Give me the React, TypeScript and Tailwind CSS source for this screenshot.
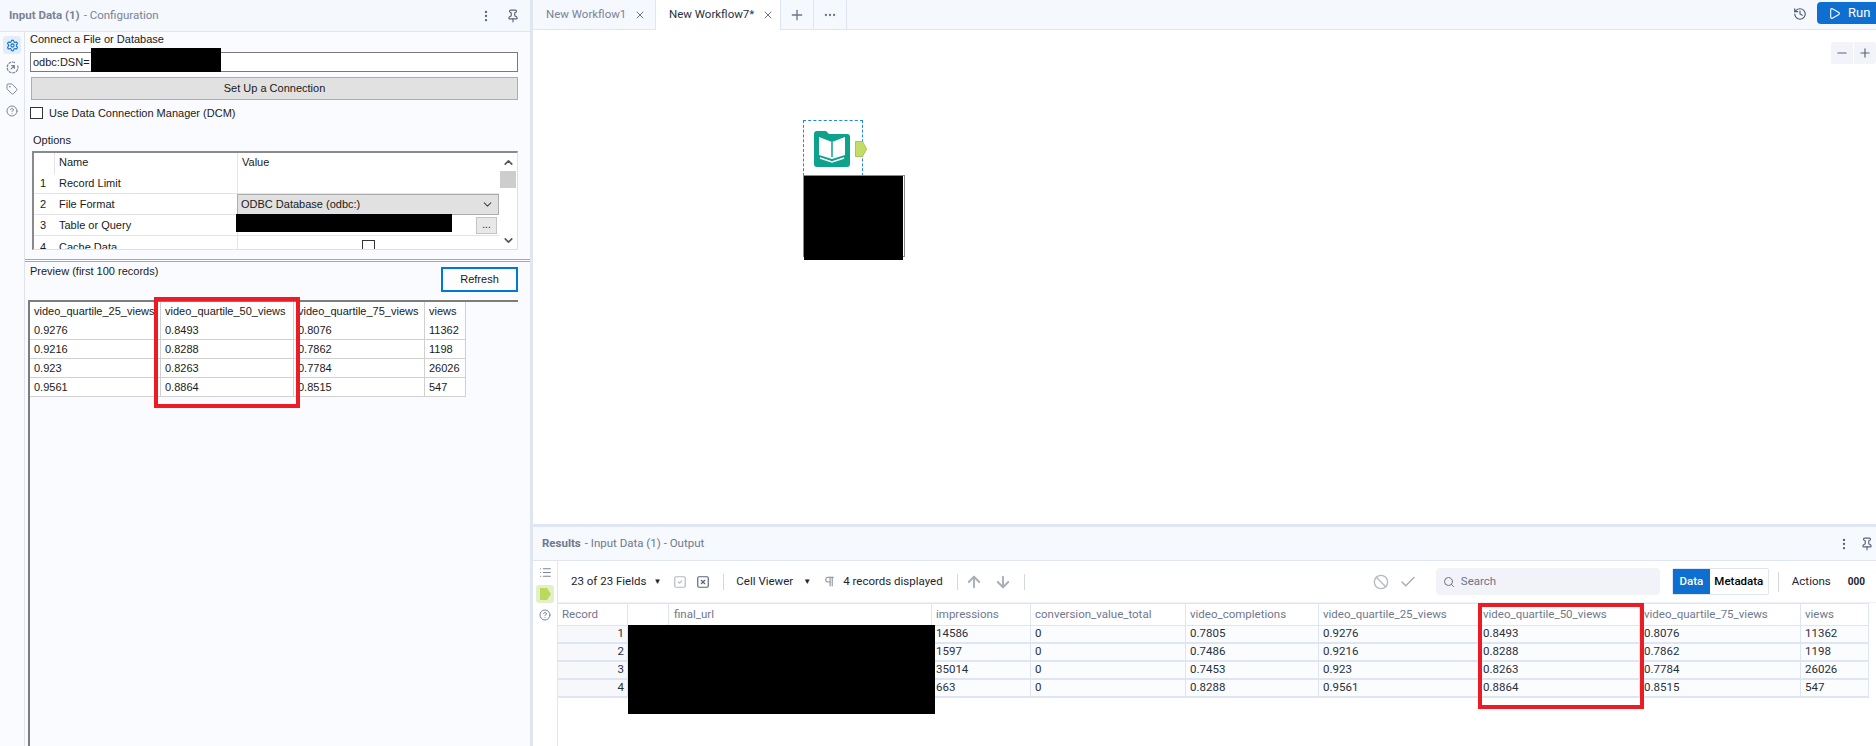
import React from 'react'
import {
  ArrowDown, ArrowUp, Ban, Check, ChevronDown, ChevronUp, CircleHelp, Ellipsis,
  EllipsisVertical, History, List, Minus, Pilcrow, Pin, Play, Plus, Search, Settings, SquareCheck, SquareX, Tag, X,
} from 'lucide-react'

const winFont = "font-['Liberation_Sans',sans-serif] text-[11px]"
const uiFont = "font-['Roboto',sans-serif] text-[11.5px]"

const previewRows = [
  ['0.9276', '0.8493', '0.8076', '11362'],
  ['0.9216', '0.8288', '0.7862', '1198'],
  ['0.923', '0.8263', '0.7784', '26026'],
  ['0.9561', '0.8864', '0.8515', '547'],
]

const resultRows = [
  ['14586', '0', '0.7805', '0.9276', '0.8493', '0.8076', '11362'],
  ['1597', '0', '0.7486', '0.9216', '0.8288', '0.7862', '1198'],
  ['35014', '0', '0.7453', '0.923', '0.8263', '0.7784', '26026'],
  ['663', '0', '0.8288', '0.9561', '0.8864', '0.8515', '547'],
]

const resultHeads = ['impressions', 'conversion_value_total', 'video_completions', 'video_quartile_25_views', 'video_quartile_50_views', 'video_quartile_75_views', 'views']

function OutputIcon() {
  return (
    <svg width="13" height="13" viewBox="0 0 13 13" fill="none" stroke="currentColor" strokeWidth="1.2">
      <path d="M9 1.6a5.4 5.4 0 1 0 2.4 2.4" strokeDasharray="3 0.8" />
      <path d="M4.8 8.2l3.4-3.4M5.2 4.6h3.2v3.2" />
    </svg>
  )
}

function ConfigPanel() {
  return (
    <aside className={`${winFont} w-[530px] shrink-0 flex flex-col bg-[#fafbfe] text-[#1a1a1a]`}>
      {/* header */}
      <div className="h-[32px] shrink-0 flex items-center pl-[9px] pr-[10px] border-b border-[#dfe6f3] bg-[#f5f8fc] text-[#7a8298]">
        <span className="font-['Roboto',sans-serif] text-[11.5px] font-bold">Input Data (1)</span>
        <span className="font-['Roboto',sans-serif] text-[11.5px] ml-1">- Configuration</span>
        <EllipsisVertical className="ml-auto mr-[13px] text-[#5a6378]" size={14} />
        <Pin className="text-[#5a6378]" size={14} />
      </div>
      <div className="flex flex-1 min-h-0">
        {/* side icons */}
        <div className="w-[25px] shrink-0 border-r border-[#dfe3ec] flex flex-col items-center pt-[4px] gap-[4px] text-[#7c8599]">
          <div className="w-[18px] h-[18px] bg-[#e3edfa] rounded-[3px] flex items-center justify-center text-[#0f6fc6]"><Settings size={13} /></div>
          <div className="w-[18px] h-[18px] flex items-center justify-center"><OutputIcon /></div>
          <div className="w-[18px] h-[18px] flex items-center justify-center"><Tag size={12} /></div>
          <div className="w-[18px] h-[18px] flex items-center justify-center"><CircleHelp size={12} /></div>
        </div>
        <div className="flex-1 min-w-0 flex flex-col pl-[5px] pr-[12px]">
          <div className="h-[20px] shrink-0 flex items-center pb-[5px]">Connect a File or Database</div>
          <div className="relative h-[20px] shrink-0 border border-[#7a7a7a] bg-white flex items-center pl-[2px]">
            odbc:DSN=
            <div className="absolute left-[60px] top-[-5px] w-[130px] h-[24px] bg-black" />
          </div>
          <div className="h-[23px] shrink-0 mt-[5px] ml-[1px] border border-[#adadad] bg-[#e1e1e1] flex items-center justify-center">Set Up a Connection</div>
          <div className="h-[12px] shrink-0 mt-[7px] flex items-center gap-[6px]">
            <div className="w-[13px] h-[12px] border border-[#333] bg-white" />
            <span>Use Data Connection Manager (DCM)</span>
          </div>
          <div className="h-[20px] shrink-0 mt-[12px] pl-[3px] pb-[2px] flex items-center">Options</div>
          {/* options table */}
          <div className="h-[99px] shrink-0 ml-[2px] border-t-2 border-l-2 border-t-[#8a8a8a] border-l-[#8a8a8a] border-r border-r-[#e0e0e0] border-b border-b-[#e0e0e0] bg-white flex overflow-hidden">
            <div className="flex-1 min-w-0 grid grid-cols-[21px_182px_1fr] grid-rows-[21px_20px_21px_21px_20px]">
              <div className="border-r border-[#e4e4e4]" />
              <div className="pl-[4px] pb-[2px] flex items-center">Name</div>
              <div className="pl-[4px] pb-[2px] flex items-center border-l border-[#e4e4e4]">Value</div>

              <div className="pl-[6px] pb-[1px] flex items-center border-b border-[#e4e4e4]">1</div>
              <div className="pl-[4px] pb-[1px] flex items-center border-b border-[#e4e4e4]">Record Limit</div>
              <div className="border-l border-b border-[#e4e4e4]" />

              <div className="pl-[6px] flex items-center border-b border-[#e4e4e4]">2</div>
              <div className="pl-[4px] flex items-center border-b border-[#e4e4e4]">File Format</div>
              <div className="pl-[3px] pr-[4px] flex items-center justify-between bg-[#e1e1e1] border border-[#adadad]">
                ODBC Database (odbc:)
                <ChevronDown size={13} className="text-[#444]" />
              </div>

              <div className="pl-[6px] flex items-center border-b border-[#e4e4e4]">3</div>
              <div className="pl-[4px] flex items-center border-b border-[#e4e4e4]">Table or Query</div>
              <div className="relative flex items-center justify-end pr-[2px] border-l border-b border-[#e4e4e4]">
                <div className="absolute left-[-2px] top-[-1px] w-[216px] h-[18px] bg-black" />
                <div className="w-[21px] h-[17px] bg-[#e8e8e8] border border-[#c4c4c4] flex items-center justify-center pb-[2px] text-[10px]">...</div>
              </div>

              <div className="pl-[6px] flex items-start pt-[3px]">4</div>
              <div className="pl-[4px] flex items-start pt-[3px]">Cache Data</div>
              <div className="border-l border-[#e4e4e4] flex justify-center pt-[4px]">
                <div className="w-[13px] h-[13px] border border-[#333]" />
              </div>
            </div>
            <div className="w-[18px] shrink-0 flex flex-col items-center pt-[3px] text-[#555] bg-white">
              <ChevronUp size={13} strokeWidth={3} />
              <div className="w-[16px] h-[17px] bg-[#cdcdcd] mt-[2px]" />
              <ChevronDown size={13} strokeWidth={3} className="mt-auto mb-[2px]" />
            </div>
          </div>
          <div className="h-[3px] shrink-0 mt-[9px] -ml-[5px] -mr-[12px] border-y border-[#a8a8a8]" />
          <div className="h-[33px] shrink-0 mt-[1px] flex items-start justify-between">
            <span>Preview (first 100 records)</span>
            <div className="mt-[4px] w-[77px] h-[25px] border-2 border-[#0078d7] bg-[#fdfdfd] flex items-center justify-center">Refresh</div>
          </div>
          {/* preview grid */}
          <div className="flex-1 min-h-0 mt-[4px] -ml-[2px] border-t-2 border-l-2 border-[#7d7d7d]">
            <div className="relative grid grid-cols-[131px_133px_131px_41px] w-fit">
              {['video_quartile_25_views', 'video_quartile_50_views', 'video_quartile_75_views', 'views'].map((h) => (
                <div key={h} className="h-[19px] pl-[4px] flex items-center whitespace-nowrap overflow-hidden bg-white border-r border-[#d0d0d0]">{h}</div>
              ))}
              {previewRows.flat().map((c, i) => (
                <div key={i} className="h-[19px] pl-[4px] flex items-center bg-white border-r border-b border-[#d0d0d0]">{c}</div>
              ))}
              {/* annotation */}
              <div className="absolute left-[124px] top-[-5px] w-[146px] h-[111px] border-4 border-[#ed1c24]" />
            </div>
          </div>
        </div>
      </div>
    </aside>
  )
}

function TabBar() {
  return (
    <div className={`${uiFont} h-[30px] shrink-0 flex bg-[#f5f8fc] border-b border-[#dfe6f3] text-[#7a8298] whitespace-nowrap`}>
      <div className="w-[122px] flex items-center pl-[13px] gap-[8px]">
        New Workflow1 <X size={12} className="text-[#6b7489]" />
      </div>
      <div className="w-[126px] h-[30px] flex items-center pl-[13px] gap-[8px] bg-white text-[#2a2f3c] border-x border-[#dfe6f3]">
        New Workflow7* <X size={12} className="text-[#6b7489]" />
      </div>
      <div className="w-[33px] flex items-center justify-center border-r border-[#dfe6f3] text-[#6b7489]"><Plus size={16} /></div>
      <div className="w-[33px] flex items-center justify-center border-r border-[#dfe6f3] text-[#6b7489]"><Ellipsis size={14} /></div>
      <History size={14} className="ml-auto mt-[7px] mr-[10px] text-[#4f5a73]" />
      <div className="w-[59px] h-[22px] mt-[2px] rounded-l-[4px] bg-[#0f6fd1] text-white flex items-center pl-[11px] gap-[7px] text-[13px]">
        <Play size={13} /> Run
      </div>
    </div>
  )
}

function Canvas() {
  return (
    <div className="relative flex-1 min-h-0 bg-white">
      <div className="absolute right-0 top-[12px] h-[22px] w-[45px] flex rounded-[3px] bg-[#f2f4f9] text-[#5a6378]">
        <div className="flex-1 flex items-center justify-center border-r border-white"><Minus size={14} /></div>
        <div className="flex-1 flex items-center justify-center"><Plus size={14} /></div>
      </div>
      {/* tool node */}
      <div className="absolute left-[270px] top-[90px] w-[60px] h-[56px] border border-dashed border-[#1e88e5]" />
      <svg className="absolute left-[280px] top-[99px]" width="38" height="39" viewBox="0 0 38 39">
        <path d="M1 5a3 3 0 0 1 3-3h9l3 3h18a3 3 0 0 1 3 3v27a3 3 0 0 1-3 3H4a3 3 0 0 1-3-3z" fill="#0ca28c" />
        <path d="M6 8l13 5 13-5v18l-13 4-13-4z" fill="#fff" />
        <path d="M19 13v15" stroke="#0ca28c" strokeWidth="1.5" />
        <path d="M7 29l12 4 12-4" stroke="#fff" strokeWidth="1.5" fill="none" />
      </svg>
      <svg className="absolute left-[322px] top-[111px]" width="12" height="16" viewBox="0 0 12 16">
        <path d="M0.5 0.5h7l4 7.5-4 7.5h-7z" fill="#c3dd66" stroke="#a9c650" />
      </svg>
      <div className="absolute left-[270px] top-[145px] w-[102px] h-[82px] border border-[#8a8a8a]" />
      <div className="absolute left-[271px] top-[146px] w-[99px] h-[84px] bg-black" />
    </div>
  )
}

function ResultsPanel() {
  return (
    <div className={`${uiFont} h-[222px] shrink-0 flex flex-col border-t-[3px] border-[#dfe6f3] bg-white text-[#2a2f3c]`}>
      <div className="h-[34px] shrink-0 flex items-center pl-[9px] pr-[2px] bg-[#f6f9fd] border-b border-[#dfe6f3] text-[#6f788e]">
        <span className="font-bold">Results</span>
        <span className="ml-1">- Input Data (1) - Output</span>
        <EllipsisVertical className="ml-auto mr-[9px] text-[#5a6378]" size={14} />
        <Pin className="text-[#5a6378]" size={14} />
      </div>
      <div className="flex flex-1 min-h-0">
        <div className="w-[25px] shrink-0 border-r border-[#dfe6f3] flex flex-col items-center pt-[5px] text-[#7c8599]">
          <List size={13} />
          <div className="mt-[6px] w-[18px] h-[18px] rounded-[3px] bg-[#e3efc8] flex items-center justify-center">
            <svg width="11" height="12" viewBox="0 0 11 12"><path d="M0 0h7l4 6-4 6H0z" fill="#bcd95c" /></svg>
          </div>
          <CircleHelp size={12} className="mt-[6px]" />
        </div>
        <div className="flex-1 min-w-0 flex flex-col">
          {/* toolbar */}
          <div className="h-[42px] shrink-0 flex items-center border-b border-[#eef1f7] text-[#1e2433]">
            <span className="ml-[13px]">23 of 23 Fields</span>
            <span className="ml-[7px] text-[8px]">▼</span>
            <SquareCheck size={14} className="ml-[12px] text-[#b5b9c2]" />
            <SquareX size={14} className="ml-[9px] text-[#5a6378]" />
            <div className="ml-[13px] w-px h-[16px] bg-[#d5d8df]" />
            <span className="ml-[12px]">Cell Viewer</span>
            <span className="ml-[10px] text-[8px]">▼</span>
            <Pilcrow size={13} className="ml-[12px] text-[#8a909c]" />
            <span className="ml-[7px]">4 records displayed</span>
            <div className="ml-[14px] w-px h-[16px] bg-[#d5d8df]" />
            <ArrowUp size={18} strokeWidth={2.5} className="ml-[7px] text-[#a9adb6]" />
            <ArrowDown size={18} strokeWidth={2.5} className="ml-[11px] text-[#a9adb6]" />
            <div className="ml-[12px] w-px h-[16px] bg-[#d5d8df]" />
            <Ban size={16} className="ml-auto text-[#b5b9c2]" />
            <Check size={18} className="ml-[10px] text-[#a9adb6]" />
            <div className="ml-[19px] w-[224px] h-[27px] rounded-[4px] bg-[#f1f3f8] flex items-center pl-[7px] gap-[6px] text-[#6b7489]">
              <Search size={12} /> Search
            </div>
            <div className="ml-[12px] flex h-[27px] border border-[#dfe6f3] rounded-[2px] font-medium">
              <div className="w-[37px] bg-[#0f6fd1] text-white flex items-center justify-center">Data</div>
              <div className="w-[58px] flex items-center justify-center text-black bg-white">Metadata</div>
            </div>
            <div className="ml-[9px] w-px h-[20px] bg-[#d5d8df]" />
            <span className="ml-[13px]">Actions</span>
            <span className="ml-[17px] mr-[11px] text-[10px] font-bold">000</span>
          </div>
          {/* data table */}
          <div className="relative grid grid-cols-[70px_41px_263px_99px_155px_133px_160px_161px_161px_68px] w-fit">
            <div className="h-[23px] pl-[4px] flex items-center border-y border-r border-[#dfe6f3] text-[#6f788e]">Record</div>
            <div className="h-[23px] border-y border-r border-[#dfe6f3]" />
            <div className="h-[23px] pl-[5px] flex items-center border-y border-r border-[#dfe6f3] text-[#6f788e]">final_url</div>
            {resultHeads.map((h) => (
              <div key={h} className="h-[23px] pl-[4px] flex items-center border-y border-r border-[#dfe6f3] text-[#6f788e] whitespace-nowrap overflow-hidden">{h}</div>
            ))}
            {resultRows.map((row, i) => (
              <React.Fragment key={i}>
                <div className="h-[18px] pr-[3px] flex items-center justify-end bg-[#f6f8fc] border-b-2 border-r border-[#dfe6f3]">{i + 1}</div>
                <div className="h-[18px] border-b-2 border-r border-[#dfe6f3]" />
                <div className="h-[18px] border-b-2 border-r border-[#dfe6f3]" />
                {row.map((c, j) => (
                  <div key={j} className="h-[18px] pl-[4px] flex items-center bg-[#fbfcfe] border-b-2 border-r border-[#dfe6f3]">{c}</div>
                ))}
              </React.Fragment>
            ))}
            {/* redactions and annotation */}
            <div className="absolute left-[70px] top-[22px] w-[307px] h-[89px] bg-black" />
            <div className="absolute left-[920px] top-0 w-[166px] h-[106px] border-4 border-[#ed1c24]" />
          </div>
        </div>
      </div>
    </div>
  )
}

export default function App() {
  return (
    <div className="w-[1876px] h-[746px] flex overflow-hidden bg-white">
      <ConfigPanel />
      <div className="w-[3px] shrink-0 bg-[#dfe6f3]" />
      <main className="flex-1 min-w-0 flex flex-col">
        <TabBar />
        <Canvas />
        <ResultsPanel />
      </main>
    </div>
  )
}
